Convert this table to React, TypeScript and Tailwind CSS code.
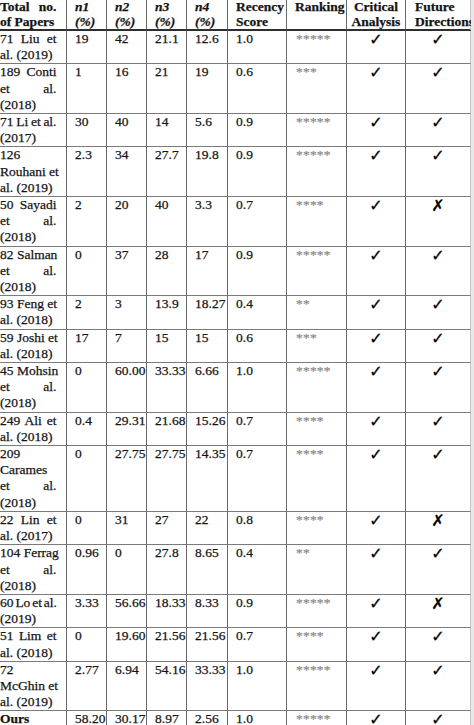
const cols = "grid-cols-[75px_40px_40px_40px_41px_59px_60px_59px_65px]";

type Row = {
  paper: string[];
  n: string[];
  recency: string;
  rank: string;
  critical: boolean;
  future: boolean;
  bold?: boolean;
};

const rows: Row[] = [
  { paper: ["71 Liu et", "al. (2019)"], n: ["19", "42", "21.1", "12.6"], recency: "1.0", rank: "*****", critical: true, future: true },
  { paper: ["189 Conti", "et al.", "(2018)"], n: ["1", "16", "21", "19"], recency: "0.6", rank: "***", critical: true, future: true },
  { paper: ["71 Li et al.", "(2017)"], n: ["30", "40", "14", "5.6"], recency: "0.9", rank: "*****", critical: true, future: true },
  { paper: ["126", "Rouhani et", "al. (2019)"], n: ["2.3", "34", "27.7", "19.8"], recency: "0.9", rank: "*****", critical: true, future: true },
  { paper: ["50 Sayadi", "et al.", "(2018)"], n: ["2", "20", "40", "3.3"], recency: "0.7", rank: "****", critical: true, future: false },
  { paper: ["82 Salman", "et al.", "(2018)"], n: ["0", "37", "28", "17"], recency: "0.9", rank: "*****", critical: true, future: true },
  { paper: ["93 Feng et", "al. (2018)"], n: ["2", "3", "13.9", "18.27"], recency: "0.4", rank: "**", critical: true, future: true },
  { paper: ["59 Joshi et", "al. (2018)"], n: ["17", "7", "15", "15"], recency: "0.6", rank: "***", critical: true, future: true },
  { paper: ["45 Mohsin", "et al.", "(2018)"], n: ["0", "60.00", "33.33", "6.66"], recency: "1.0", rank: "*****", critical: true, future: true },
  { paper: ["249 Ali et", "al. (2018)"], n: ["0.4", "29.31", "21.68", "15.26"], recency: "0.7", rank: "****", critical: true, future: true },
  { paper: ["209", "Carames", "et al.", "(2018)"], n: ["0", "27.75", "27.75", "14.35"], recency: "0.7", rank: "****", critical: true, future: true },
  { paper: ["22 Lin et", "al. (2017)"], n: ["0", "31", "27", "22"], recency: "0.8", rank: "****", critical: true, future: false },
  { paper: ["104 Ferrag", "et al.", "(2018)"], n: ["0.96", "0", "27.8", "8.65"], recency: "0.4", rank: "**", critical: true, future: true },
  { paper: ["60 Lo et al.", "(2019)"], n: ["3.33", "56.66", "18.33", "8.33"], recency: "0.9", rank: "*****", critical: true, future: false },
  { paper: ["51 Lim et", "al. (2018)"], n: ["0", "19.60", "21.56", "21.56"], recency: "0.7", rank: "****", critical: true, future: true },
  { paper: ["72", "McGhin et", "al. (2019)"], n: ["2.77", "6.94", "54.16", "33.33"], recency: "1.0", rank: "*****", critical: true, future: true },
  { paper: ["Ours"], n: ["58.20", "30.17", "8.97", "2.56"], recency: "1.0", rank: "*****", critical: true, future: true, bold: true },
];

const cell = "border-r border-b border-r-[#6a6a6a] border-b-[#7a7a7a]";
const head = "border-r border-b-2 border-r-[#6a6a6a] border-b-[#2e2e2e] leading-[14.5px]";

function PaperLines({ lines }: { lines: string[] }) {
  return (
    <>
      {lines.map((l, i) => {
        const last = i === lines.length - 1;
        const tight = l === "71 Li et al." || l === "60 Lo et al.";
        return (
          <div
            key={i}
            className={`whitespace-nowrap ${last ? "" : "[text-align-last:justify]"} ${tight ? "[word-spacing:-1.5px]" : ""}`}
          >
            {l}
          </div>
        );
      })}
    </>
  );
}

function Mark({ ok }: { ok: boolean }) {
  return (
    <span className="text-[16px] leading-[16px] text-black" style={{ fontFamily: '"DejaVu Sans", sans-serif' }}>
      {ok ? "✓" : "✗"}
    </span>
  );
}

export default function App() {
  return (
    <div
      className="relative w-[474px] h-[725px] overflow-hidden bg-white text-[#141414] text-[13.5px] leading-[16.2px] [-webkit-text-stroke:0.25px_currentColor]"
      style={{ fontFamily: '"Liberation Serif", "Times New Roman", serif' }}
    >
      <div className={`grid ${cols} w-max -ml-[8px]`}>
        {/* header */}
        <div className={`${head} pl-[8px] pr-[9.5px] font-bold`}>
          <PaperLines lines={["Total no.", "of Papers"]} />
        </div>
        {["n1", "n2", "n3", "n4"].map((h) => (
          <div key={h} className={`${head} pl-[8px] font-bold italic`}>
            <div>{h}</div>
            <div>(%)</div>
          </div>
        ))}
        <div className={`${head} pl-[8px] font-bold`}>
          <div>Recency</div>
          <div>Score</div>
        </div>
        <div className={`${head} pl-[8px] font-bold`}>Ranking</div>
        <div className={`${head} text-center font-bold whitespace-nowrap`}>
          <div>Critical</div>
          <div>Analysis</div>
        </div>
        <div className={`${head} border-r-[#c4c4c4] pl-[9px] font-bold whitespace-nowrap`}>
          <div>Future</div>
          <div>Directions</div>
        </div>

        {/* body */}
        {rows.map((r, i) => (
          <div key={i} className="contents">
            <div className={`${cell} pl-[8px] pr-[9.5px] ${r.bold ? "font-bold" : ""}`}>
              <PaperLines lines={r.paper} />
            </div>
            {r.n.map((v, j) => (
              <div key={j} className={`${cell} pl-[8px] whitespace-nowrap`}>
                {v}
              </div>
            ))}
            <div className={`${cell} pl-[8px]`}>{r.recency}</div>
            <div className={`${cell} pl-[9px] text-[#8e8e8e] text-[13.5px] tracking-[0.2px]`}>{r.rank}</div>
            <div className={`${cell} text-center pt-[1px]`}>
              <Mark ok={r.critical} />
            </div>
            <div className={`${cell} border-r-[#c4c4c4] text-center pt-[1px]`}>
              <Mark ok={r.future} />
            </div>
          </div>
        ))}
      </div>
      <div className="absolute right-0 top-0 h-full w-[3px] bg-[#e8e8e8]" />
    </div>
  );
}
